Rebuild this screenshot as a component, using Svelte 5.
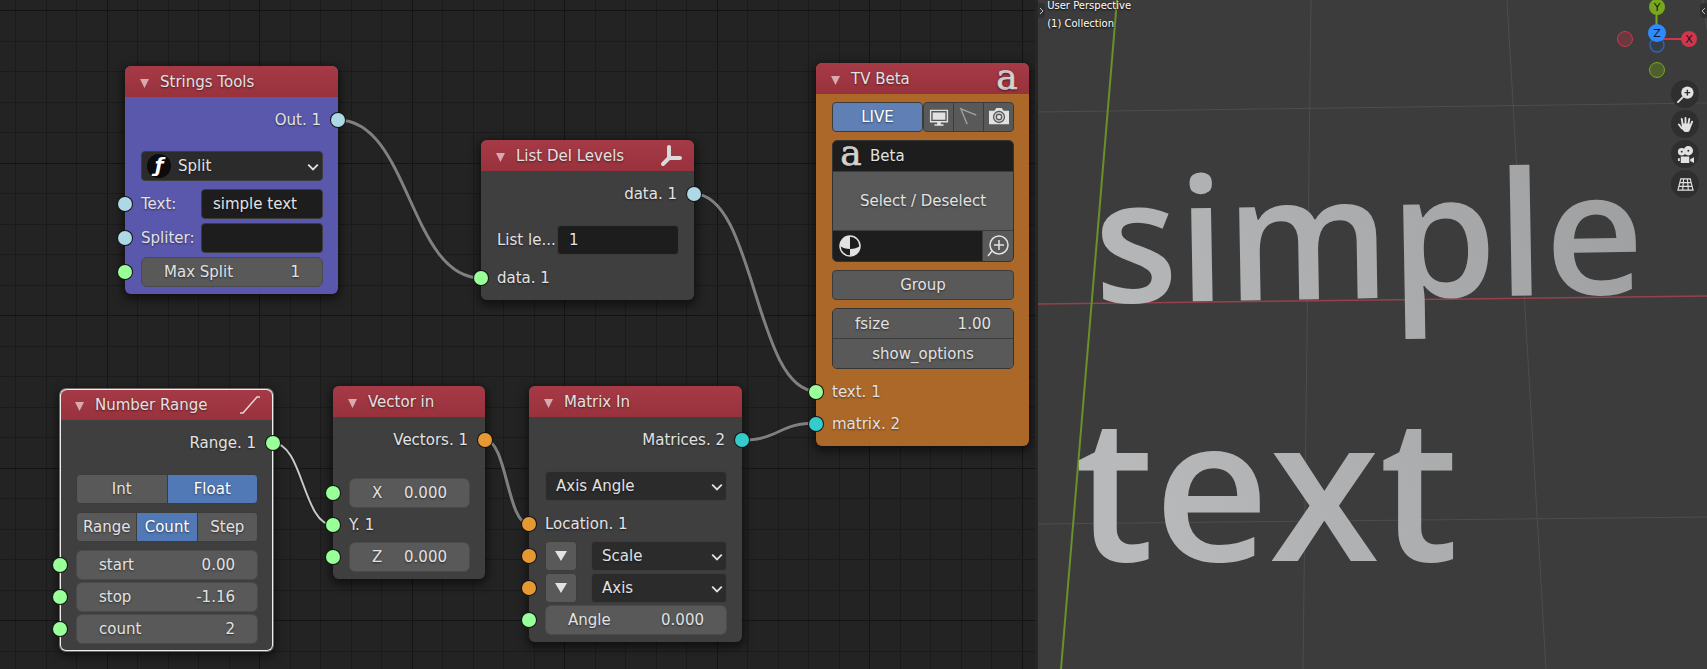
<script>
  const STEP = 30.5;
  // every fifth grid line is a major one
  const columns = Array.from({ length: 70 }, (_, i) => ({
    pos: Math.round(-46 + STEP * i),
    major: i % 5 === 0
  }));
  const rows = Array.from({ length: 50 }, (_, i) => ({
    pos: Math.round(10 + STEP * i),
    major: i % 5 === 0
  }));

  const links = [
    { from: [338, 120], to: [481, 278] },
    { from: [694, 194], to: [816, 391] },
    { from: [273, 443], to: [333, 525], selected: true },
    { from: [485, 440], to: [529, 524] },
    { from: [742, 440], to: [816, 423] }
  ];

  function linkPath({ from, to }) {
    const mid = (from[0] + to[0]) / 2;
    return `M${from[0]} ${from[1]} C${mid} ${from[1]} ${mid} ${to[1]} ${to[0]} ${to[1]}`;
  }

  let operation = 'Split';
  let text = 'simple text';
  let spliter = '';
  let maxSplit = '1';
  let level = '1';
  let live = true;
  let objectName = 'Beta';
  let material = '';
  let fsize = '1.00';
  let numberType = 'Float';
  let rangeMode = 'Count';
  let range = { start: '0.00', stop: '-1.16', count: '2' };
  let vector = { x: '0.000', z: '0.000' };
  let matrixMode = 'Axis Angle';
  let scaleMode = 'Scale';
  let axisMode = 'Axis';
  let angle = '0.000';
</script>

<main class="screen">
  <section class="editor" aria-label="Node editor">
    <svg class="backdrop" aria-hidden="true">
      <g shape-rendering="crispEdges">
        {#each columns as c}
          <rect class:major={c.major} class="grid" x={c.pos} y="0" width="1" height="100%" />
        {/each}
        {#each rows as r}
          <rect class:major={r.major} class="grid" x="0" y={r.pos} width="100%" height="1" />
        {/each}
      </g>
      {#each links as link}
        <path class="link-edge" d={linkPath(link)} />
        <path class="link" class:selected={link.selected} d={linkPath(link)} />
      {/each}
    </svg>

    <article class="node strings">
      <header>
        <svg class="fold" viewBox="0 0 10 10"><path d="M0 0h10L5 10z" /></svg>
        <h2>Strings Tools</h2>
      </header>
      <div class="body">
        <div class="row out">Out. 1<i class="socket right text"></i></div>
        <div class="row first select-box">
          <svg class="fn-icon" viewBox="0 0 24 24" aria-hidden="true">
            <circle cx="12" cy="12" r="12" />
            <text x="12" y="18" text-anchor="middle">ƒ</text>
          </svg>
          <select class="with-icon" aria-label="Operation" bind:value={operation}>
            <option>Split</option>
          </select>
          <svg class="chevron" viewBox="0 0 10 6"><path d="M1 1l4 4 4-4" /></svg>
        </div>
        <div class="row block">
          <i class="socket text"></i>
          <label for="st-text">Text:</label>
          <input id="st-text" class="field" type="text" bind:value={text} />
        </div>
        <div class="row spaced">
          <i class="socket text"></i>
          <label for="st-spliter">Spliter:</label>
          <input id="st-spliter" class="field" type="text" bind:value={spliter} />
        </div>
        <div class="row spaced">
          <i class="socket number"></i>
          <div class="slider">
            <label for="st-max">Max Split</label>
            <input id="st-max" type="text" bind:value={maxSplit} />
          </div>
        </div>
      </div>
    </article>

    <article class="node levels">
      <header>
        <svg class="fold" viewBox="0 0 10 10"><path d="M0 0h10L5 10z" /></svg>
        <h2>List Del Levels</h2>
        <svg class="head-icon" viewBox="0 0 22 22" aria-hidden="true">
          <path class="axes" d="M9 2v11M9 13h11M9 13l-6 6" />
        </svg>
      </header>
      <div class="body">
        <div class="row out">data. 1<i class="socket right text"></i></div>
        <div class="row first">
          <label for="ld-level">List le...</label>
          <input id="ld-level" class="field" type="text" bind:value={level} />
        </div>
        <div class="row block"><i class="socket number"></i>data. 1</div>
      </div>
    </article>

    <article class="node beta">
      <header>
        <svg class="fold" viewBox="0 0 10 10"><path d="M0 0h10L5 10z" /></svg>
        <h2>TV Beta</h2>
        <svg class="head-icon" viewBox="0 0 22 22" aria-hidden="true">
          <text class="letter" x="12" y="21" text-anchor="middle">a</text>
        </svg>
      </header>
      <div class="body">
        <div class="row">
          <button class="live" class:active={live} aria-pressed={live} on:click={() => (live = !live)}>LIVE</button>
          <div class="group icons">
            <button aria-label="Show in viewport">
              <svg viewBox="0 0 22 22"><path fill-rule="evenodd" d="M1 3h20v14H1zM2.500 4.500v11h17v-11zM4 6h14v8H4zM9 17h4v2h3v1.500H6V19h3z" /></svg>
            </button>
            <button aria-label="Selectable">
              <svg viewBox="0 0 22 22"><path class="dim" d="M9 19L2 2l17 7" /></svg>
            </button>
            <button aria-label="Show in render">
              <svg viewBox="0 0 22 22">
                <path d="M0 4h6l2-3h6l2 3h6v15H0z" />
                <circle class="lens" cx="11" cy="11" r="6" />
                <circle class="lens" cx="11" cy="11" r="3" />
              </svg>
            </button>
          </div>
        </div>
        <div class="block panel">
          <div class="row name">
            <svg class="field-icon" viewBox="0 0 22 22" aria-hidden="true">
              <text class="letter" x="12" y="20" text-anchor="middle">a</text>
            </svg>
            <input class="flat" aria-label="Base name" type="text" bind:value={objectName} />
          </div>
          <button class="select-all">Select / Deselect</button>
          <div class="row name last">
            <svg class="field-icon" viewBox="0 0 22 22" aria-hidden="true">
              <circle class="ball" cx="11" cy="11" r="10" />
              <path d="M11 1A10 10 0 0 0 1 11Q5 14 11 14zM11 14Q17 14 21 11A10 10 0 0 1 11 21z" />
            </svg>
            <input class="flat" aria-label="Material" type="text" bind:value={material} />
            <button class="add" aria-label="Add material">
              <svg viewBox="0 0 22 22"><circle cx="12" cy="10" r="9" /><path d="M12 5v10M7 10h10M5 16l-4 5" /></svg>
            </button>
          </div>
        </div>
        <div class="row block"><button class="wide">Group</button></div>
        <div class="block panel">
          <div class="slider joined">
            <label for="tv-fsize">fsize</label>
            <input id="tv-fsize" type="text" bind:value={fsize} />
          </div>
          <button class="wide joined">show_options</button>
        </div>
        <div class="row block"><i class="socket number"></i>text. 1</div>
        <div class="row tight"><i class="socket matrix"></i>matrix. 2</div>
      </div>
    </article>

    <article class="node range selected">
      <header>
        <svg class="fold" viewBox="0 0 10 10"><path d="M0 0h10L5 10z" /></svg>
        <h2>Number Range</h2>
        <svg class="head-icon" viewBox="0 0 22 22" aria-hidden="true">
          <path class="ramp" d="M1 19h3L18 3h3" />
        </svg>
      </header>
      <div class="body">
        <div class="row out">Range. 1<i class="socket right number"></i></div>
        <div class="row first group">
          {#each ['Int', 'Float'] as option}
            <button class:active={numberType === option} on:click={() => (numberType = option)}>{option}</button>
          {/each}
        </div>
        <div class="row block group">
          {#each ['Range', 'Count', 'Step'] as option}
            <button class:active={rangeMode === option} on:click={() => (rangeMode = option)}>{option}</button>
          {/each}
        </div>
        {#each ['start', 'stop', 'count'] as key, i}
          <div class="row {i ? 'tight' : 'block'}">
            <i class="socket number"></i>
            <div class="slider">
              <label for="nr-{key}">{key}</label>
              <input id="nr-{key}" type="text" bind:value={range[key]} />
            </div>
          </div>
        {/each}
      </div>
    </article>

    <article class="node vector">
      <header>
        <svg class="fold" viewBox="0 0 10 10"><path d="M0 0h10L5 10z" /></svg>
        <h2>Vector in</h2>
      </header>
      <div class="body">
        <div class="row out">Vectors. 1<i class="socket right vec"></i></div>
        <div class="row later">
          <i class="socket number"></i>
          <div class="slider">
            <label for="vi-x">X</label>
            <input id="vi-x" type="text" bind:value={vector.x} />
          </div>
        </div>
        <div class="row tight"><i class="socket number"></i>Y. 1</div>
        <div class="row tight">
          <i class="socket number"></i>
          <div class="slider">
            <label for="vi-z">Z</label>
            <input id="vi-z" type="text" bind:value={vector.z} />
          </div>
        </div>
      </div>
    </article>

    <article class="node matrix-in">
      <header>
        <svg class="fold" viewBox="0 0 10 10"><path d="M0 0h10L5 10z" /></svg>
        <h2>Matrix In</h2>
      </header>
      <div class="body">
        <div class="row out">Matrices. 2<i class="socket right matrix"></i></div>
        <div class="row first select-box">
          <select aria-label="Matrix mode" bind:value={matrixMode}>
            <option>Axis Angle</option>
          </select>
          <svg class="chevron" viewBox="0 0 10 6"><path d="M1 1l4 4 4-4" /></svg>
        </div>
        <div class="row block"><i class="socket vec"></i>Location. 1</div>
        <div class="row tight">
          <i class="socket vec"></i>
          <button class="drop" aria-label="Scale menu">
            <svg viewBox="0 0 12 10"><path d="M0 0h12L6 10z" /></svg>
          </button>
          <div class="select-box">
            <select aria-label="Scale" bind:value={scaleMode}><option>Scale</option></select>
            <svg class="chevron" viewBox="0 0 10 6"><path d="M1 1l4 4 4-4" /></svg>
          </div>
        </div>
        <div class="row tight">
          <i class="socket vec"></i>
          <button class="drop" aria-label="Axis menu">
            <svg viewBox="0 0 12 10"><path d="M0 0h12L6 10z" /></svg>
          </button>
          <div class="select-box">
            <select aria-label="Axis" bind:value={axisMode}><option>Axis</option></select>
            <svg class="chevron" viewBox="0 0 10 6"><path d="M1 1l4 4 4-4" /></svg>
          </div>
        </div>
        <div class="row tight">
          <i class="socket number"></i>
          <div class="slider">
            <label for="mi-angle">Angle</label>
            <input id="mi-angle" type="text" bind:value={angle} />
          </div>
        </div>
      </div>
    </article>
  </section>

  <section class="viewport" aria-label="3D viewport">
    <svg class="scene" viewBox="0 0 669 669" preserveAspectRatio="xMinYMin slice">
      <defs>
        <linearGradient id="shade" gradientUnits="userSpaceOnUse" x1="60" y1="400" x2="600" y2="200">
          <stop offset="0" stop-color="#b8b9ba" />
          <stop offset="1" stop-color="#9fa0a1" />
        </linearGradient>
      </defs>
      <path class="floor" d="M0 112L669 103M0 524L669 517M273 0L265 669M469 0L508 669M665 0L669 30" />
      <path class="axis-x" d="M0 304L669 296" />
      <path class="axis-y" d="M79 0L23 669" />
      <g class="solid" fill="url(#shade)">
        <text transform="rotate(-1 60 303)" x="57" y="303" font-size="172">simple</text>
        <text x="37" y="561" font-size="200">text</text>
      </g>
    </svg>

    <p class="info">User Perspective<br />(1) Collection</p>
    <button class="tab tab-left" aria-label="Show toolbar">
      <svg viewBox="0 0 5 8"><path d="M1 1l3 3-3 3" /></svg>
    </button>
    <button class="tab tab-right" aria-label="Show sidebar">
      <svg viewBox="0 0 5 8"><path d="M4 1L1 4l3 3" /></svg>
    </button>

    <svg class="gizmo" viewBox="0 0 90 80" aria-label="View orientation">
      <path d="M49.500 7v26" stroke="#76a81c" stroke-width="2" />
      <path d="M50 39h32" stroke="#d0364d" stroke-width="2" />
      <circle cx="50" cy="45" r="7" fill="#363d47" stroke="#3265a8" stroke-width="1.500" />
      <circle cx="18" cy="39" r="7.500" fill="#6c383f" stroke="#d0364d" />
      <circle cx="50" cy="70" r="7.500" fill="#4f602d" stroke="#76a81c" />
      <circle cx="50" cy="7" r="8" fill="#76a81c" />
      <circle cx="50" cy="33" r="9" fill="#2e8bff" />
      <circle cx="82" cy="39" r="8" fill="#d0364d" />
      <text x="50" y="11">Y</text>
      <text x="50" y="37">Z</text>
      <text x="82" y="43">X</text>
    </svg>

    <nav class="tools">
      <button aria-label="Zoom">
        <svg viewBox="0 0 18 18"><circle cx="11" cy="7" r="6.500" /><path class="line" d="M6 12l-5 5" /><path class="cut" d="M11 4v6M8 7h6" /></svg>
      </button>
      <button aria-label="Pan">
        <svg viewBox="0 0 18 18">
          <path class="finger" d="M6 9L5 3M9 8V2M12 9l1-6M14 11l2-5M5 13L2 9" />
          <path d="M5 8h8l2 2q-1 7-4 7H9q-2 0-4-4z" />
        </svg>
      </button>
      <button aria-label="Camera view">
        <svg viewBox="0 0 18 18">
          <circle cx="5" cy="6" r="4" /><circle cx="12" cy="5" r="5" />
          <path d="M4 11h9v7H4zM14 14l4-2v6l-4-2zM1 13h2v3H1z" />
          <circle class="hole" cx="5" cy="6" r="1" /><circle class="hole" cx="12" cy="5" r="1" />
        </svg>
      </button>
      <button aria-label="Switch perspective">
        <svg viewBox="0 0 18 18"><path class="mesh" d="M4 3h10l3 12H1zM3 7h12M2 11h14M7 3L6 15M11 3l1 12" /></svg>
      </button>
    </nav>
  </section>
</main>

<style>
  :global(body) {
    background: #232323;
    overflow: hidden;
  }

  .screen {
    display: flex;
    height: 100vh;
    font-family: "DejaVu Sans", sans-serif;
    font-size: 15px;
    line-height: 20px;
    color: #e2e2e2;
  }

  .editor {
    position: relative;
    flex: 1037 1 0;
    min-width: 0;
    box-sizing: border-box;
    overflow: hidden;
    background: #232323;
    border-right: 3px solid #262626;
  }

  .backdrop {
    position: absolute;
    inset: 0;
    width: 100%;
    height: 100%;
  }

  .grid {
    fill: #1b1b1b;
  }

  .grid.major {
    fill: #141414;
  }

  .link,
  .link-edge {
    fill: none;
    stroke: #808080;
    stroke-width: 3;
  }

  .link-edge {
    stroke: #1e1e1e;
    stroke-width: 4;
  }

  .link.selected {
    stroke: #c8c8c8;
    stroke-width: 2;
  }

  /* nodes */
  .node {
    position: absolute;
    width: 213px;
    border-radius: 6px;
    background: rgba(65, 65, 65, 0.96);
    box-shadow: 0 3px 10px 2px rgba(0, 0, 0, 0.55);
    text-shadow: 0 1px 2px rgba(0, 0, 0, 0.5);
  }

  .strings {
    left: 125px;
    top: 66px;
    background: rgba(92, 91, 178, 0.96);
  }

  .levels {
    left: 481px;
    top: 140px;
  }

  .beta {
    left: 816px;
    top: 63px;
    background: rgba(178, 107, 42, 0.96);
  }

  .range {
    left: 60px;
    top: 389px;
  }

  .vector {
    left: 333px;
    top: 386px;
    width: 152px;
  }

  .matrix-in {
    left: 529px;
    top: 386px;
  }

  .node.selected {
    box-shadow: inset 0 0 0 1px #ededed, 0 0 0 1px rgba(237, 237, 237, 0.4), 0 3px 10px 2px rgba(0, 0, 0, 0.55);
  }

  .node.selected header {
    margin: 0 1px;
    padding: 0 11px 0 14px;
    box-shadow: inset 0 1px 0 #ededed;
  }

  header {
    display: flex;
    align-items: center;
    height: 31px;
    padding: 0 12px 0 15px;
    border-radius: 6px 6px 0 0;
    background: linear-gradient(#a63a47, #98323c);
  }

  h2 {
    flex: 1;
    margin: 0 0 0 11px;
    font-size: 15px;
    font-weight: normal;
    line-height: 20px;
  }

  .fold {
    width: 9px;
    height: 9px;
    margin-top: 3px;
    fill: #d8a9ae;
  }

  .head-icon,
  .field-icon {
    width: 22px;
    height: 22px;
    overflow: visible;
    fill: #e2e2e2;
  }

  .letter {
    font-family: "DejaVu Serif", serif;
    font-size: 36px;
    stroke: #e2e2e2;
    stroke-width: 0.5;
  }

  .axes {
    fill: none;
    stroke: #dadada;
    stroke-width: 4;
    stroke-linecap: round;
  }

  .ramp {
    fill: none;
    stroke: #e8d5d7;
    stroke-width: 1.5;
  }

  .body {
    padding: 8px 15px 7px 16px;
  }

  .row {
    position: relative;
    display: flex;
    align-items: center;
    height: 30px;
  }

  .out {
    justify-content: flex-end;
    padding-right: 2px;
  }

  .first {
    margin-top: 16px;
  }

  .block {
    margin-top: 8px;
  }

  .spaced {
    margin-top: 4px;
  }

  .tight {
    margin-top: 2px;
  }

  .later {
    margin-top: 23px;
  }

  .socket {
    position: absolute;
    left: -23px;
    top: 8px;
    width: 14px;
    height: 14px;
    box-sizing: border-box;
    border-radius: 50%;
    box-shadow: 0 0 0 1px #151515;
  }

  .socket.right {
    left: auto;
    right: -22px;
  }

  .socket.text {
    background: #add8e6;
  }

  .socket.number {
    background: #99ff99;
  }

  .socket.vec {
    background: #e59933;
  }

  .socket.matrix {
    background: #33cccc;
  }

  /* controls */
  input,
  select,
  button {
    box-sizing: border-box;
    margin: 0;
    border: 1px solid #3c3c3c;
    border-radius: 4px;
    font: inherit;
    color: inherit;
    text-shadow: inherit;
  }

  input {
    min-width: 0;
    outline: none;
  }

  button {
    height: 30px;
    padding: 0;
    background: #595959;
  }

  button.active {
    background: #5179b5;
    color: #fff;
  }

  .field {
    width: 122px;
    height: 30px;
    margin-left: auto;
    padding: 0 11px;
    background: #1d1d1d;
  }

  .select-box {
    position: relative;
    flex: 1;
    display: flex;
  }

  select {
    flex: 1;
    height: 30px;
    padding: 0 24px 0 10px;
    appearance: none;
    background: #2b2b2b;
  }

  select.with-icon {
    padding-left: 36px;
  }

  .chevron {
    position: absolute;
    right: 4px;
    top: 12px;
    width: 12px;
    height: 8px;
    fill: none;
    stroke: #e2e2e2;
    stroke-width: 1.5;
  }

  .fn-icon {
    position: absolute;
    left: 6px;
    top: 3px;
    width: 24px;
    height: 24px;
    fill: #0c0c0c;
  }

  .fn-icon text {
    fill: #fff;
    font-size: 20px;
    font-weight: bold;
    font-style: italic;
  }

  .slider {
    flex: 1;
    display: flex;
    align-items: center;
    height: 30px;
    box-sizing: border-box;
    padding: 0 22px;
    border: 1px solid #4a4a4a;
    border-radius: 6px;
    background: #595959;
  }

  .slider input {
    flex: 1;
    width: 0;
    padding: 0;
    border: none;
    background: none;
    text-align: right;
  }

  .group {
    display: flex;
  }

  .group button {
    flex: 1;
    border-radius: 0;
  }

  .group button + button {
    margin-left: -1px;
  }

  .group button:first-child {
    border-radius: 4px 0 0 4px;
  }

  .group button:last-child {
    border-radius: 0 4px 4px 0;
  }

  .live {
    width: 91px;
  }

  .live.active {
    background: #5f7fb5;
  }

  .icons {
    flex: 1;
  }

  .icons button {
    display: flex;
    align-items: center;
    justify-content: center;
  }

  .icons svg {
    width: 20px;
    height: 20px;
    fill: #e2e2e2;
  }

  .icons .dim {
    fill: none;
    stroke: #a0a0a0;
    stroke-width: 1.5;
  }

  .icons .lens {
    fill: none;
    stroke: #595959;
    stroke-width: 1.5;
  }

  .panel {
    border: 1px solid #333;
    border-radius: 5px;
    box-sizing: border-box;
  }

  .panel .name {
    height: 30px;
    padding-left: 6px;
    border-radius: 4px 4px 0 0;
    background: #1d1d1d;
  }

  .panel .name.last {
    border-radius: 0 0 4px 4px;
  }

  .flat {
    flex: 1;
    height: 30px;
    padding: 0 0 0 9px;
    border: none;
    background: none;
  }

  .ball {
    fill: #1d1d1d;
    stroke: #e2e2e2;
    stroke-width: 1.5;
  }

  .select-all {
    display: block;
    width: 100%;
    height: 60px;
    border-width: 1px 0;
    border-radius: 0;
  }

  .add {
    display: flex;
    align-items: center;
    justify-content: center;
    width: 31px;
    border-width: 0 0 0 1px;
    border-radius: 0 0 4px 0;
  }

  .add svg {
    width: 22px;
    height: 22px;
    fill: none;
    stroke: #e2e2e2;
    stroke-width: 1.5;
  }

  .wide {
    flex: 1;
  }

  .slider.joined {
    height: 29px;
    border: none;
    border-radius: 4px 4px 0 0;
  }

  .wide.joined {
    display: block;
    width: 100%;
    border-width: 1px 0 0;
    border-radius: 0 0 4px 4px;
  }

  .drop {
    width: 32px;
    margin-right: 14px;
  }

  .drop svg {
    width: 12px;
    height: 10px;
    fill: #e2e2e2;
  }

  /* 3D view */
  .viewport {
    position: relative;
    flex: 670 1 0;
    min-width: 0;
    overflow: hidden;
    background: #3c3c3c;
  }

  .scene {
    display: block;
    width: 100%;
    height: 100%;
  }

  .floor {
    fill: none;
    stroke: #4d4d4d;
  }

  .axis-x {
    stroke: #97404c;
    stroke-width: 1.5;
  }

  .axis-y {
    stroke: #6a9029;
    stroke-width: 2;
  }

  .solid {
    font-family: "Open Sans", sans-serif;
    font-weight: 600;
  }

  .info {
    position: absolute;
    left: 9px;
    top: -3px;
    margin: 0;
    font-size: 10px;
    line-height: 18px;
    color: #fff;
    text-shadow: 0 1px 2px #000;
  }

  .tab {
    position: absolute;
    top: 3px;
    display: flex;
    align-items: center;
    justify-content: center;
    width: 7px;
    height: 15px;
    border: none;
    background: #303030;
  }

  .tab svg {
    width: 5px;
    height: 8px;
    fill: none;
    stroke: #c0c0c0;
  }

  .tab-left {
    left: 0;
    border-radius: 0 4px 4px 0;
  }

  .tab-right {
    right: 0;
    border-radius: 4px 0 0 4px;
  }

  .gizmo {
    position: absolute;
    top: 0;
    right: 10px;
    width: 90px;
    height: 80px;
  }

  .gizmo text {
    fill: #151515;
    font-size: 11px;
    text-anchor: middle;
  }

  .tools {
    position: absolute;
    top: 80px;
    right: 8px;
    display: flex;
    flex-direction: column;
    gap: 2px;
  }

  .tools button {
    display: flex;
    align-items: center;
    justify-content: center;
    width: 28px;
    height: 28px;
    border: none;
    border-radius: 50%;
    background: #2f2f2f;
  }

  .tools svg {
    width: 17px;
    height: 17px;
    fill: #e2e2e2;
  }

  .line,
  .finger {
    fill: none;
    stroke: #e2e2e2;
    stroke-width: 2;
    stroke-linecap: round;
  }

  .cut {
    stroke: #2f2f2f;
    stroke-width: 1.5;
  }

  .hole {
    fill: #2f2f2f;
  }

  .mesh {
    fill: none;
    stroke: #e2e2e2;
    stroke-width: 1.2;
  }
</style>
